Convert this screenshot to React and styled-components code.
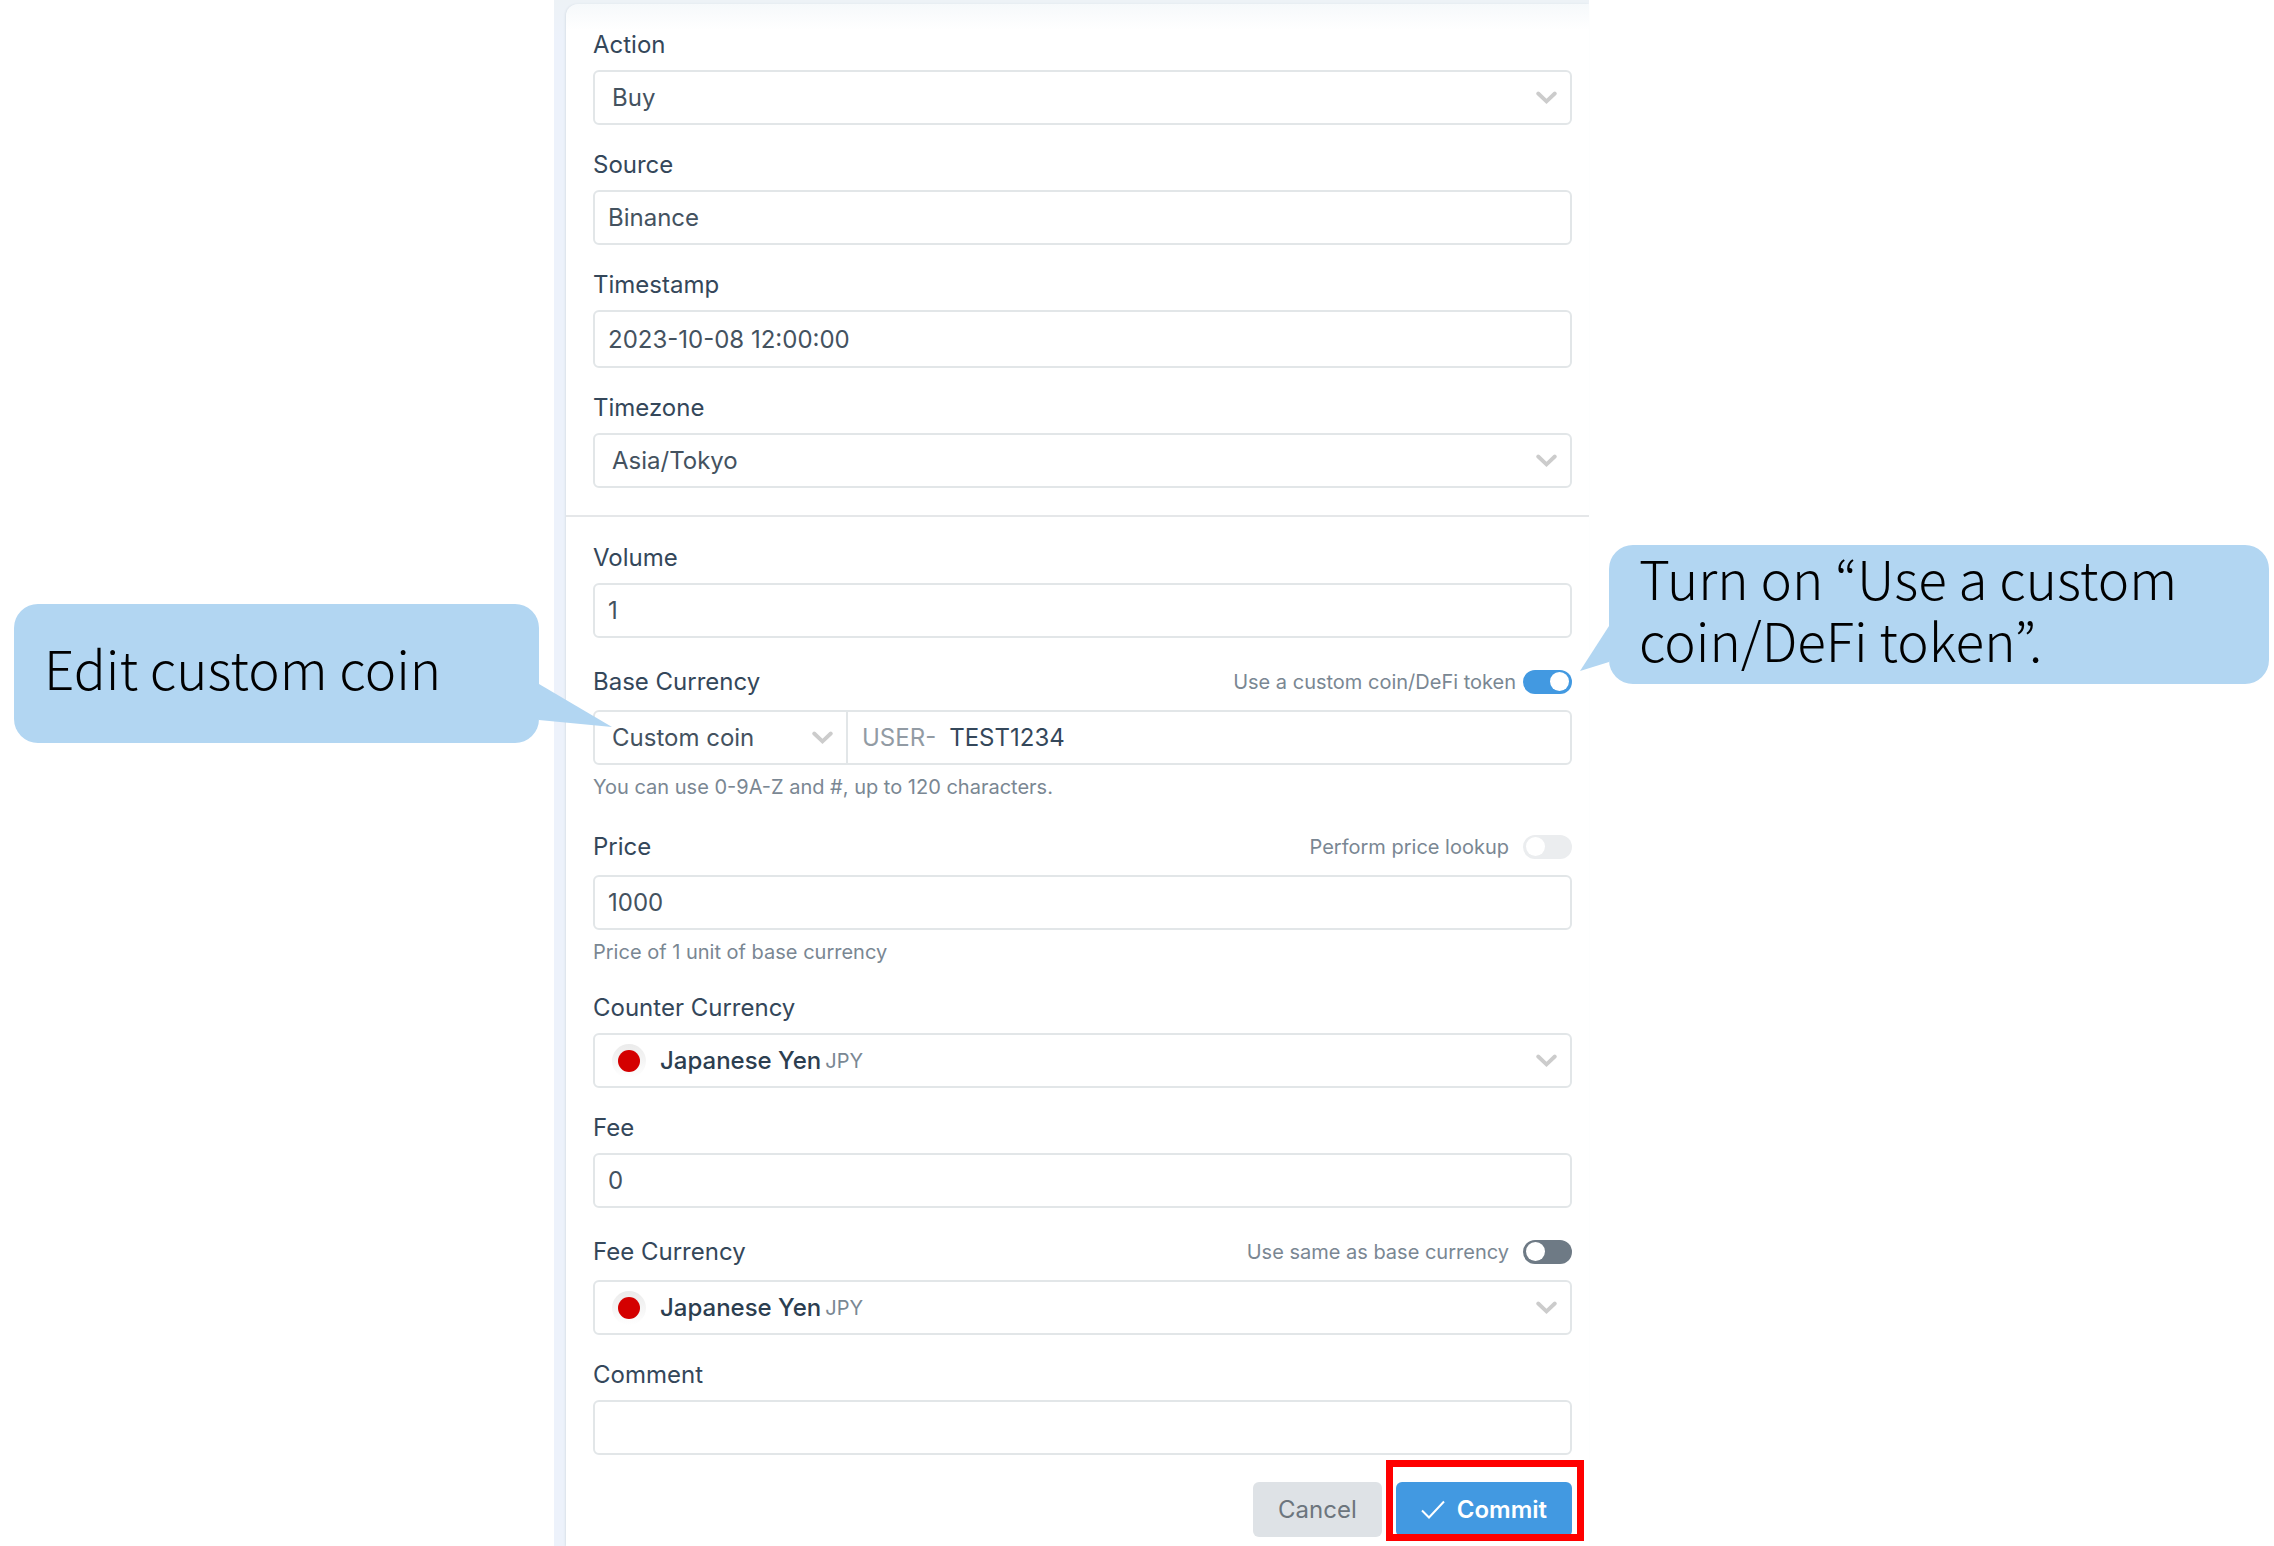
import React, { useState } from "react";
import { styled, createGlobalStyle } from "styled-components";

const GlobalStyle = createGlobalStyle`
  *, *::before, *::after {
    box-sizing: border-box;
  }
  body {
    margin: 0;
    background: #fff;
    color: #364859;
    font-family: Inter, "Noto Sans", sans-serif;
    font-size: 24px;
    line-height: 32px;
  }
  input, select, button {
    font: inherit;
    color: inherit;
  }
`;

const Page = styled.main`
  display: grid;
  grid-template-columns: minmax(0, 554fr) minmax(0, 1035fr) minmax(0, 685fr);
  min-height: 100vh;
`;

const Panel = styled.div`
  padding: 4px 0 0 12px;
  background: linear-gradient(#edf2f6, #edf2fb 40px);
`;

const Card = styled.form`
  height: 100%;
  padding-bottom: 8px;
  border-top-left-radius: 12px;
  background: linear-gradient(#f6f9fb, #fff 26px);
  box-shadow: -1px 0 2px #dbe2e9;
`;

const Section = styled.section`
  display: flex;
  flex-direction: column;
  gap: 24px;
  padding: 25px 17px 27px 27px;
  border-top: ${(props) => (props.$divided ? "2px solid #e5e7e9" : "none")};
`;

const Field = styled.div`
  display: flex;
  flex-direction: column;
`;

const FieldHead = styled.div`
  display: flex;
  align-items: center;
  justify-content: space-between;
  min-height: ${(props) => (props.$roomy ? "39px" : "32px")};
  margin-bottom: 9px;
`;

const Label = styled.label`
  color: #34475a;
`;

const Hint = styled.p`
  margin: 6px 0 0;
  color: #7a8793;
  font-size: 20px;
`;

const Box = styled.div`
  display: flex;
  align-items: center;
  height: ${(props) => (props.$tall ? "58px" : "55px")};
  border: 2px solid #e2e6e8;
  border-radius: 6px;
  background: #fff;
  overflow: hidden;
`;

const Input = styled.input`
  flex: 1;
  min-width: 0;
  height: 100%;
  padding: 0 13px;
  border: none;
  outline: none;
  background: transparent;
  color: ${(props) => (props.$strong ? "#34475a" : "#44525f")};
`;

const SelectInput = styled.select`
  flex: ${(props) => (props.$fit ? "none" : "1")};
  field-sizing: ${(props) => (props.$fit ? "content" : "fixed")};
  min-width: 0;
  height: 100%;
  padding: ${(props) => (props.$fit ? "0" : "0 0 0 17px")};
  border: none;
  outline: none;
  appearance: none;
  background: transparent;
  color: ${(props) => (props.$fit ? "#2c3e50" : "#44525f")};
  font-weight: ${(props) => (props.$fit ? "500" : "400")};
`;

const Arrow = styled.svg`
  flex: none;
  width: 21px;
  height: 13px;
  margin: 0 13px 0 auto;
  pointer-events: none;
`;

const CoinType = styled.div`
  display: flex;
  align-items: center;
  width: 253px;
  height: 100%;
  border-right: 2px solid #e2e6e8;
`;

const Prefix = styled.span`
  padding-left: 14px;
  color: #929ba4;
`;

const Flag = styled.span`
  display: flex;
  align-items: center;
  justify-content: center;
  flex: none;
  width: 34px;
  height: 34px;
  margin: 0 14px 0 17px;
  border-radius: 50%;
  background: linear-gradient(#ebebeb, #fff);

  &::before {
    content: "";
    width: 22px;
    height: 22px;
    border-radius: 50%;
    background: #d40000;
  }
`;

const Code = styled.span`
  margin-left: 4px;
  color: #7a8793;
  font-size: 20px;
`;

const SwitchLabel = styled.label`
  display: flex;
  align-items: center;
  gap: ${(props) => (props.$snug ? "7px" : "14px")};
  color: #7a8793;
  font-size: 20px;
`;

const SwitchInput = styled.input`
  appearance: none;
  display: flex;
  align-items: center;
  width: 49px;
  height: 24px;
  margin: 0;
  padding: 0 3px;
  border-radius: 12px;
  background: #6e7a85;

  &::before {
    content: "";
    width: 19px;
    height: 19px;
    border-radius: 50%;
    background: #fff;
  }
  &:checked {
    justify-content: flex-end;
    background: #4299e1;
  }
  &:disabled {
    background: #ebedef;
  }
`;

const Footer = styled.div`
  display: flex;
  justify-content: flex-end;
  gap: 14px;
  padding-right: 17px;
`;

const Button = styled.button`
  display: flex;
  align-items: center;
  justify-content: center;
  gap: 12px;
  height: 55px;
  padding: 0 25px;
  border: none;
  border-radius: 6px;
  background: ${(props) => (props.$primary ? "#4299e1" : "#dee2e6")};
  color: ${(props) => (props.$primary ? "#fff" : "#6c757d")};
  font-weight: ${(props) => (props.$primary ? "600" : "400")};
`;

const Highlight = styled.div`
  position: relative;

  &::after {
    content: "";
    position: absolute;
    inset: -22px -12px -4px -10px;
    border: 7px solid #ff0000;
    pointer-events: none;
  }
`;

const Callout = styled.aside`
  position: relative;
  display: flex;
  align-items: center;
  min-height: 139px;
  padding: 0 30px 14px;
  border-radius: 24px;
  background: #b2d6f2;
  color: #000;
  font-family: "Noto Sans CJK JP", sans-serif;
  font-size: 53px;
  font-weight: 300;
  line-height: 62px;
`;

const LeftCallout = styled(Callout)`
  margin: 604px 15px auto 14px;
`;

const RightCallout = styled(Callout)`
  margin: 545px 5px auto 20px;
`;

const LeftTail = styled.svg`
  position: absolute;
  top: 80px;
  left: 100%;
  width: 73px;
  height: 43px;
`;

const RightTail = styled.svg`
  position: absolute;
  top: 81px;
  right: 100%;
  width: 29px;
  height: 45px;
`;

function Chevron() {
  return (
    <Arrow viewBox="0 0 21 13" fill="none" aria-hidden="true">
      <path
        d="M2.2 2.5 10.5 10.3 18.8 2.5"
        stroke="#cccccc"
        strokeWidth="3.8"
        strokeLinecap="round"
      />
    </Arrow>
  );
}

function TextField({ id, label, value, tall }) {
  return (
    <Field>
      <FieldHead>
        <Label htmlFor={id}>{label}</Label>
      </FieldHead>
      <Box $tall={tall}>
        <Input id={id} type="text" defaultValue={value} />
      </Box>
    </Field>
  );
}

function SelectField({ id, label, value }) {
  return (
    <Field>
      <FieldHead>
        <Label htmlFor={id}>{label}</Label>
      </FieldHead>
      <Box>
        <SelectInput id={id}>
          <option>{value}</option>
        </SelectInput>
        <Chevron />
      </Box>
    </Field>
  );
}

function CurrencyField({ id, label, children }) {
  return (
    <Field>
      <FieldHead $roomy={Boolean(children)}>
        <Label htmlFor={id}>{label}</Label>
        {children}
      </FieldHead>
      <Box>
        <Flag />
        <SelectInput id={id} $fit>
          <option>Japanese Yen</option>
        </SelectInput>
        <Code>JPY</Code>
        <Chevron />
      </Box>
    </Field>
  );
}

function Switch({ label, on = false, disabled, snug }) {
  const [checked, setChecked] = useState(on);
  return (
    <SwitchLabel $snug={snug}>
      {label}
      <SwitchInput
        type="checkbox"
        role="switch"
        checked={checked}
        disabled={disabled}
        onChange={(e) => setChecked(e.target.checked)}
      />
    </SwitchLabel>
  );
}

function App() {
  return (
    <>
      <GlobalStyle />
      <Page>
        <LeftCallout>
          Edit custom coin
          <LeftTail viewBox="0 0 73 43" aria-hidden="true">
            <path d="M0 0 73 43 0 36Z" fill="#b2d6f2" />
          </LeftTail>
        </LeftCallout>
        <Panel>
          <Card onSubmit={(e) => e.preventDefault()}>
            <Section>
              <SelectField id="action" label="Action" value="Buy" />
              <TextField id="source" label="Source" value="Binance" />
              <TextField
                id="timestamp"
                label="Timestamp"
                value="2023-10-08 12:00:00"
                tall
              />
              <SelectField id="timezone" label="Timezone" value="Asia/Tokyo" />
            </Section>
            <Section $divided>
              <TextField id="volume" label="Volume" value="1" />
              <Field>
                <FieldHead $roomy>
                  <Label htmlFor="base">Base Currency</Label>
                  <Switch label="Use a custom coin/DeFi token" on snug />
                </FieldHead>
                <Box>
                  <CoinType>
                    <SelectInput aria-label="Coin type">
                      <option>Custom coin</option>
                    </SelectInput>
                    <Chevron />
                  </CoinType>
                  <Prefix>USER-</Prefix>
                  <Input id="base" type="text" defaultValue="TEST1234" $strong />
                </Box>
                <Hint>You can use 0-9A-Z and #, up to 120 characters.</Hint>
              </Field>
              <Field>
                <FieldHead $roomy>
                  <Label htmlFor="price">Price</Label>
                  <Switch label="Perform price lookup" disabled />
                </FieldHead>
                <Box>
                  <Input id="price" type="text" defaultValue="1000" />
                </Box>
                <Hint>Price of 1 unit of base currency</Hint>
              </Field>
              <CurrencyField id="counter" label="Counter Currency" />
              <TextField id="fee" label="Fee" value="0" />
              <CurrencyField id="fee-currency" label="Fee Currency">
                <Switch label="Use same as base currency" />
              </CurrencyField>
              <TextField id="comment" label="Comment" value="" />
            </Section>
            <Footer>
              <Button type="button">Cancel</Button>
              <Highlight>
                <Button type="submit" $primary>
                  <svg width="24" height="19" viewBox="0 0 24 19" fill="none" aria-hidden="true">
                    <path d="M1 10.5 8 17.5 23 1.5" stroke="#fff" strokeWidth="2" />
                  </svg>
                  Commit
                </Button>
              </Highlight>
            </Footer>
          </Card>
        </Panel>
        <RightCallout>
          Turn on “Use a custom coin/DeFi token”.
          <RightTail viewBox="0 0 29 45" aria-hidden="true">
            <path d="M29 0 0 45 29 36Z" fill="#b2d6f2" />
          </RightTail>
        </RightCallout>
      </Page>
    </>
  );
}

export default App;
